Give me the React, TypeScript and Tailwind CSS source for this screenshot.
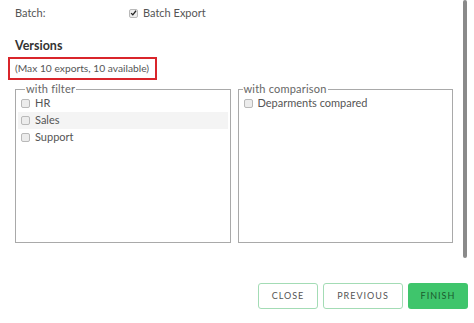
import React from 'react';

function Box({ checked = false }: { checked?: boolean }) {
  return (
    <span className="flex h-[9px] w-[9px] shrink-0 items-center justify-center rounded-[2px] border border-[#b9b9b9] bg-[#ececec]">
      {checked && (
        <svg viewBox="0 0 10 10" className="h-[8px] w-[8px]">
          <path d="M1.5 5.2 L4 7.6 L8.6 1.8" fill="none" stroke="#222" strokeWidth="1.8" />
        </svg>
      )}
    </span>
  );
}

function Row({ label, shaded = false }: { label: string; shaded?: boolean }) {
  return (
    <div className={`flex h-[17px] items-center gap-[5px] pl-[3px] ${shaded ? 'bg-[#f4f4f4]' : ''}`}>
      <Box />
      <span className="text-[11px] text-[#555]">{label}</span>
    </div>
  );
}

function Group({ title, items, wide }: { title: string; items: string[]; wide?: boolean }) {
  return (
    <div className="mt-[6px] h-[154px] min-w-0 flex-1 border border-[#a9a9a9] px-[2px]">
      <div className={wide ? '-mt-[7px] flex pl-[7px]' : '-mt-[7px] flex pl-[2px]'}>
        <span className="bg-white px-[1px] text-[11px] leading-[12px] tracking-[0.2px] text-[#666]">{title}</span>
      </div>
      {items.map((it, i) => (
        <Row key={it} label={it} shaded={i === 1} />
      ))}
    </div>
  );
}

export default function App() {
  return (
    <div className="relative h-[323px] w-[474px] overflow-hidden bg-white font-['Lato',sans-serif]">
      <div className="px-[15px] pt-[6px]">
        <div className="flex h-[14px] items-center text-[11px] text-[#555]">
          <span className="w-[114px]">Batch:</span>
          <Box checked />
          <span className="ml-[5px]">Batch Export</span>
        </div>

        <div className="mt-[18px] text-[12.5px] font-bold leading-[16px] text-[#333]">Versions</div>

        <div className="-ml-[7px] mt-[3px] flex h-[23px] w-[149px] items-center whitespace-nowrap border-2 border-[#d9252b] pl-[5px] text-[10.25px] text-[#555]">
          (Max 10 exports, 10 available)
        </div>

        <div className="mt-[3px] flex w-[438px] gap-[7px]">
          <Group title="with filter" items={['HR', 'Sales', 'Support']} wide />
          <Group title="with comparison" items={['Deparments compared']} />
        </div>
      </div>

      <div className="mt-[40px] flex justify-end gap-[5px] pr-[6px] text-[9px] tracking-[1px]">
        <button className="h-[26px] w-[60px] rounded-[3px] border border-[#a3dcb5] bg-white text-[#555]">CLOSE</button>
        <button className="h-[26px] w-[80px] rounded-[3px] border border-[#a3dcb5] bg-white text-[#555]">PREVIOUS</button>
        <button className="h-[26px] w-[60px] rounded-[3px] bg-[#3fc56c] text-[#1b5a2e]">FINISH</button>
      </div>

      <div className="absolute left-[463px] top-0 h-[258px] w-[4px] rounded-full bg-[#8a8a8a]" />
    </div>
  );
}
